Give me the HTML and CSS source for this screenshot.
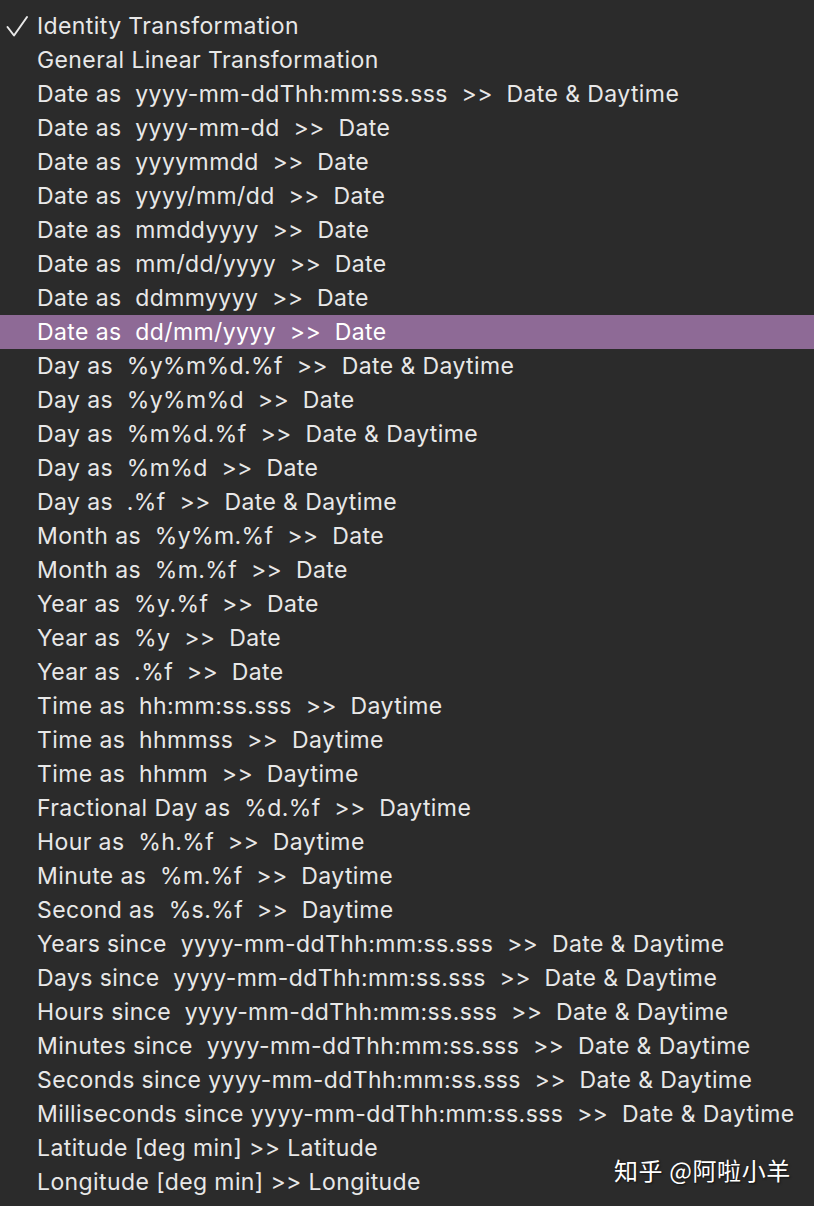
FILE: index.html
```html
<!DOCTYPE html>
<html>
<head>
<meta charset="utf-8">
<link rel="stylesheet" href="styles.css">
</head>
<body>
<div class="menu">
<div class="item"><span class="check"><svg width="37" height="34" viewBox="0 0 37 34"><polyline points="7.5,18 14,26.5 27,8" fill="none" stroke="#e8e8e8" stroke-width="2" stroke-linecap="round" stroke-linejoin="round"/></svg></span><span class="label">Identity Transformation</span></div>
<div class="item"><span class="check"></span><span class="label">General Linear Transformation</span></div>
<div class="item"><span class="check"></span><span class="label">Date as  yyyy-mm-ddThh:mm:ss.sss  &gt;&gt;  Date &amp; Daytime</span></div>
<div class="item"><span class="check"></span><span class="label">Date as  yyyy-mm-dd  &gt;&gt;  Date</span></div>
<div class="item"><span class="check"></span><span class="label">Date as  yyyymmdd  &gt;&gt;  Date</span></div>
<div class="item"><span class="check"></span><span class="label">Date as  yyyy/mm/dd  &gt;&gt;  Date</span></div>
<div class="item"><span class="check"></span><span class="label">Date as  mmddyyyy  &gt;&gt;  Date</span></div>
<div class="item"><span class="check"></span><span class="label">Date as  mm/dd/yyyy  &gt;&gt;  Date</span></div>
<div class="item"><span class="check"></span><span class="label">Date as  ddmmyyyy  &gt;&gt;  Date</span></div>
<div class="item selected"><span class="check"></span><span class="label">Date as  dd/mm/yyyy  &gt;&gt;  Date</span></div>
<div class="item"><span class="check"></span><span class="label">Day as  %y%m%d.%f  &gt;&gt;  Date &amp; Daytime</span></div>
<div class="item"><span class="check"></span><span class="label">Day as  %y%m%d  &gt;&gt;  Date</span></div>
<div class="item"><span class="check"></span><span class="label">Day as  %m%d.%f  &gt;&gt;  Date &amp; Daytime</span></div>
<div class="item"><span class="check"></span><span class="label">Day as  %m%d  &gt;&gt;  Date</span></div>
<div class="item"><span class="check"></span><span class="label">Day as  .%f  &gt;&gt;  Date &amp; Daytime</span></div>
<div class="item"><span class="check"></span><span class="label">Month as  %y%m.%f  &gt;&gt;  Date</span></div>
<div class="item"><span class="check"></span><span class="label">Month as  %m.%f  &gt;&gt;  Date</span></div>
<div class="item"><span class="check"></span><span class="label">Year as  %y.%f  &gt;&gt;  Date</span></div>
<div class="item"><span class="check"></span><span class="label">Year as  %y  &gt;&gt;  Date</span></div>
<div class="item"><span class="check"></span><span class="label">Year as  .%f  &gt;&gt;  Date</span></div>
<div class="item"><span class="check"></span><span class="label">Time as  hh:mm:ss.sss  &gt;&gt;  Daytime</span></div>
<div class="item"><span class="check"></span><span class="label">Time as  hhmmss  &gt;&gt;  Daytime</span></div>
<div class="item"><span class="check"></span><span class="label">Time as  hhmm  &gt;&gt;  Daytime</span></div>
<div class="item"><span class="check"></span><span class="label">Fractional Day as  %d.%f  &gt;&gt;  Daytime</span></div>
<div class="item"><span class="check"></span><span class="label">Hour as  %h.%f  &gt;&gt;  Daytime</span></div>
<div class="item"><span class="check"></span><span class="label">Minute as  %m.%f  &gt;&gt;  Daytime</span></div>
<div class="item"><span class="check"></span><span class="label">Second as  %s.%f  &gt;&gt;  Daytime</span></div>
<div class="item"><span class="check"></span><span class="label">Years since  yyyy-mm-ddThh:mm:ss.sss  &gt;&gt;  Date &amp; Daytime</span></div>
<div class="item"><span class="check"></span><span class="label">Days since  yyyy-mm-ddThh:mm:ss.sss  &gt;&gt;  Date &amp; Daytime</span></div>
<div class="item"><span class="check"></span><span class="label">Hours since  yyyy-mm-ddThh:mm:ss.sss  &gt;&gt;  Date &amp; Daytime</span></div>
<div class="item"><span class="check"></span><span class="label">Minutes since  yyyy-mm-ddThh:mm:ss.sss  &gt;&gt;  Date &amp; Daytime</span></div>
<div class="item"><span class="check"></span><span class="label">Seconds since yyyy-mm-ddThh:mm:ss.sss  &gt;&gt;  Date &amp; Daytime</span></div>
<div class="item"><span class="check"></span><span class="label">Milliseconds since yyyy-mm-ddThh:mm:ss.sss  &gt;&gt;  Date &amp; Daytime</span></div>
<div class="item"><span class="check"></span><span class="label">Latitude [deg min] &gt;&gt; Latitude</span></div>
<div class="item"><span class="check"></span><span class="label">Longitude [deg min] &gt;&gt; Longitude</span></div>
<div class="watermark">知乎 @阿啦小羊</div>
</div>
</body>
</html>
```
FILE: styles.css
```css
html, body {
  margin: 0;
  padding: 0;
  background: #2b2b2b;
}
body {
  width: 814px;
  height: 1206px;
  overflow: hidden;
  font-family: Inter, "Noto Sans", sans-serif;
}
.menu {
  position: relative;
  padding-top: 9px;
  height: 1197px;
  background: #2b2b2b;
}
.item {
  display: flex;
  align-items: center;
  height: 34px;
  color: #e8e8e8;
  font-size: 23px;
  letter-spacing: 0.4px;
  white-space: pre;
}
.item.selected {
  background: #8e6a96;
  color: #ffffff;
}
.check {
  width: 37px;
  height: 34px;
  flex: none;
  display: block;
}
.check svg {
  display: block;
}
.watermark {
  position: absolute;
  left: 614px;
  top: 1153px;
  color: #ffffff;
  font-family: "Noto Sans CJK SC", sans-serif;
  font-size: 24px;
  letter-spacing: 0.6px;
  line-height: 34px;
  text-shadow: 1px 1px 2px rgba(0,0,0,0.6);
  white-space: pre;
}
```
